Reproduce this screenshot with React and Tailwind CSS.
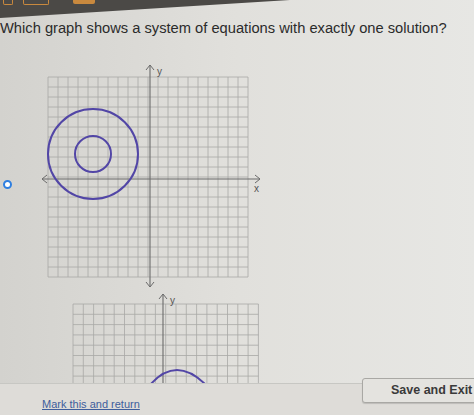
import React from "react";

const INK = "#5246a6";

function Grid({ x0, y0, cols, rows, cell, color = "#a8a8a6" }) {
  const lines = [];
  for (let i = 0; i <= cols; i++) {
    const x = x0 + i * cell;
    lines.push(<line key={"v" + i} x1={x} y1={y0} x2={x} y2={y0 + rows * cell} stroke={color} strokeWidth="0.8" />);
  }
  for (let j = 0; j <= rows; j++) {
    const y = y0 + j * cell;
    lines.push(<line key={"h" + j} x1={x0} y1={y} x2={x0 + cols * cell} y2={y} stroke={color} strokeWidth="0.8" />);
  }
  return <g>{lines}</g>;
}

function CirclesGraph() {
  return (
    <svg width="260" height="232" viewBox="0 0 260 232" className="block">
      <Grid x0={28} y0={18} cols={20} rows={20} cell={10} />
      {/* axes */}
      <line x1="22" y1="120" x2="240" y2="120" stroke="#6b6b6b" strokeWidth="1.1" />
      <line x1="130" y1="6" x2="130" y2="228" stroke="#6b6b6b" strokeWidth="1.1" />
      <path d="M27 116 L22 120 L27 124" fill="none" stroke="#6b6b6b" strokeWidth="1" />
      <path d="M235 116 L240 120 L235 124" fill="none" stroke="#6b6b6b" strokeWidth="1" />
      <path d="M126 11 L130 6 L134 11" fill="none" stroke="#6b6b6b" strokeWidth="1" />
      <path d="M126 223 L130 228 L134 223" fill="none" stroke="#6b6b6b" strokeWidth="1" />
      <text x="137" y="16" fontSize="10" fill="#555" fontFamily="Liberation Sans, sans-serif">y</text>
      <text x="234" y="133" fontSize="10" fill="#555" fontFamily="Liberation Sans, sans-serif">x</text>
      <circle cx="73" cy="95" r="45" fill="none" stroke={INK} strokeWidth="2" />
      <circle cx="73" cy="95" r="18" fill="none" stroke={INK} strokeWidth="2" />
    </svg>
  );
}

function ParabolaGraph() {
  return (
    <svg width="210" height="94" viewBox="0 0 210 94" className="block">
      <Grid x0={13} y0={15} cols={18} rows={8} cell={10.3} />
      <line x1="103" y1="5" x2="103" y2="94" stroke="#6b6b6b" strokeWidth="1.1" />
      <path d="M99 10 L103 5 L107 10" fill="none" stroke="#6b6b6b" strokeWidth="1" />
      <text x="110" y="15" fontSize="10" fill="#555" fontFamily="Liberation Sans, sans-serif">y</text>
      <path d="M90 96 Q116 66 146 96" fill="none" stroke={INK} strokeWidth="2" />
    </svg>
  );
}

export default function App() {
  return (
    <div className="relative w-[474px] h-[415px] overflow-hidden bg-linear-to-r from-[#d3d2ce] via-[#e1e0dc] to-[#e7e7e4] font-['Liberation_Sans',Arial,sans-serif] flex flex-col">
      {/* dark toolbar edge at the top of the photo */}
      <div className="absolute left-0 top-0 w-[290px] h-[18px] bg-[#4b4946] [clip-path:polygon(0_0,100%_0,0_100%)] flex gap-[10px] pl-[3px]">
        <div className="w-[10px] h-[5px] border border-t-0 border-[#c9893e] rounded-b-[2px]" />
        <div className="w-[26px] h-[5px] border border-t-0 border-[#c9893e] rounded-b-[2px]" />
        <div className="w-[22px] h-[4px] bg-[#c9893e] rounded-b-[2px] ml-[14px]" />
      </div>

      <p className="pt-[19px] text-[14.7px] leading-[18px] text-[#2b2b2b] whitespace-nowrap">
        Which graph shows a system of equations with exactly one solution?
      </p>

      <div className="flex items-start mt-[22px]">
        <div className="mt-[121px] ml-[3px] w-[9px] h-[9px] rounded-full border-[2.5px] border-[#2f7fe0] bg-white" />
        <div className="ml-[8px]">
          <CirclesGraph />
        </div>
      </div>

      <div className="ml-[60px] -mt-[2px]">
        <ParabolaGraph />
      </div>

      <div className="flex-1 border-t border-[#c7c7c3] bg-[#dedcd8] flex items-start justify-between">
        <a className="self-end mb-[3px] ml-[42px] text-[11px] text-[#3f5e9c] underline">Mark this and return</a>
        <button className="mt-[-6px] w-[118px] h-[25px] -mr-[6px] rounded-[3px] border border-[#a9a8a4] bg-[#e4e3df] text-[12.5px] font-bold text-[#3a3a3a] text-left pl-[28px] shadow-[0_1px_1px_rgba(0,0,0,0.15)]">
          Save and Exit
        </button>
      </div>
    </div>
  );
}
